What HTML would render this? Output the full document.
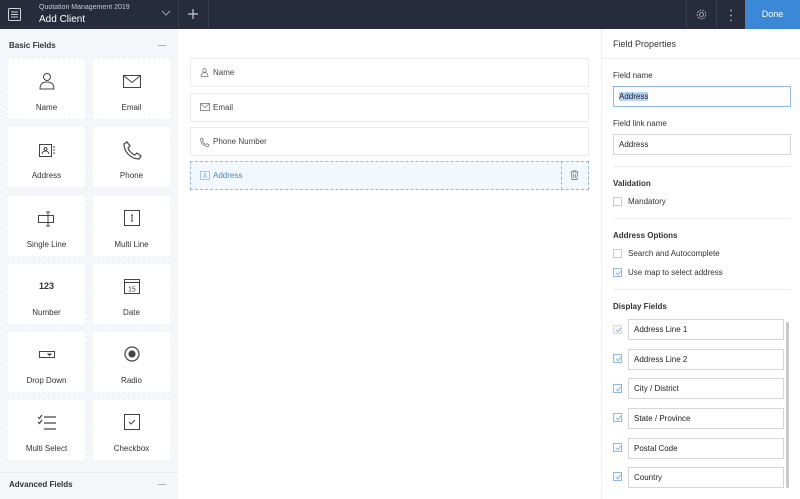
<!DOCTYPE html><html><head><style>
*{box-sizing:border-box;margin:0;padding:0}
body{width:800px;height:499px;overflow:hidden;font-family:"Liberation Sans",sans-serif;background:#fff;position:relative;color:#333}
.a{position:absolute}
.hdr{left:0;top:0;width:800px;height:29px;background:#262c3b}
.vs{top:0;width:1px;height:29px;background:#363d4d}
.side{left:0;top:29px;width:178px;height:470px;background:#f4f6fa}
.card{width:79px;height:62px;background:#fff;border:1px dashed #eef0f3;text-align:center;font-size:8px;color:#333}
.card span{position:absolute;left:0;right:0;top:44px}
.card svg{position:absolute;left:28px;top:12px}
.fld{left:190px;width:399px;height:29px;border:1px solid #ebebeb;font-size:8px;color:#444;padding:0 0 0 22px;line-height:27px}
.fld svg{position:absolute;left:9px;top:9px}
.rp{left:601px;top:29px;width:199px;height:470px;border-left:1px solid #eceef1;background:#fff}
.lbl{font-size:8px;color:#333}
.h{font-size:8px;font-weight:bold;color:#333}
.inp{border:1px solid #d6d6d6;font-size:8px;line-height:19px;padding-left:5px;color:#222}
.div{height:1px;background:#eee;left:613px;width:178px}
.cb{width:9px;height:9px;border:1px solid #ccc;background:#fff}
.cbc{border-color:#8fb8e6;background:#f6faff}
.cbc:after{content:"";position:absolute;left:3px;top:1px;width:2px;height:4px;border:solid #8fb8e6;border-width:0 1px 1px 0;transform:rotate(40deg)}
</style></head><body>
<div class="a hdr"></div>
<svg class="a" style="left:8px;top:8px" width="13" height="13" viewBox="0 0 13 13" fill="none" stroke="#cfd3da" stroke-width="1"><rect x="0.5" y="0.5" width="12" height="12" rx="1"/><path d="M3 4h7M3 6.5h7M3 9h7"/></svg>
<div class="a" style="left:39px;top:4px;font-size:7px;color:#c5c9d1">Quotation Management 2019</div>
<div class="a" style="left:39px;top:14px;font-size:10px;color:#fff">Add Client</div>
<svg class="a" style="left:161px;top:10px" width="10" height="6"><path d="M1 1l4 4 4-4" stroke="#9aa0ab" fill="none"/></svg>
<div class="a vs" style="left:178px"></div><div class="a vs" style="left:208px"></div>
<svg class="a" style="left:187px;top:8px" width="12" height="12"><path d="M6 1v10M1 6h10" stroke="#c5c9d1" stroke-width="1.2"/></svg>
<div class="a vs" style="left:686px"></div><div class="a vs" style="left:716px"></div>
<svg class="a" style="left:696px;top:9px" width="11" height="11" viewBox="0 0 11 11" fill="none" stroke="#9aa0ab"><circle cx="5.5" cy="5.5" r="2"/><circle cx="5.5" cy="5.5" r="4.3" stroke-dasharray="2 1"/></svg>
<div class="a" style="left:730px;top:8px;width:2px;height:13px;background:radial-gradient(circle,#9aa0ab 1px,transparent 1px) 0 0/2px 5px"></div>
<div class="a" style="left:745px;top:0;width:55px;height:29px;background:#3b87d8;color:#fff;font-size:9px;text-align:center;line-height:28px">Done</div>

<div class="a side"></div>
<div class="a h" style="left:9px;top:41px">Basic Fields</div>
<div class="a" style="left:158px;top:45px;width:8px;height:1px;background:#aaa"></div>

<div class="a card" style="left:7px;top:58px"><svg width="22" height="20" viewBox="0 0 22 20" fill="none" stroke="#444"><circle cx="11" cy="6" r="3.5"/><path d="M4 18c0-5 3-7 7-7s7 2 7 7z"/></svg><span>Name</span></div>
<div class="a card" style="left:92px;top:58px"><svg width="22" height="20" viewBox="0 0 22 20" fill="none" stroke="#444"><rect x="2.5" y="4.5" width="17" height="12"/><path d="M2.5 4.5l8.5 7 8.5-7"/></svg><span>Email</span></div>
<div class="a card" style="left:7px;top:126px"><svg width="22" height="22" viewBox="0 0 22 22" fill="none" stroke="#444"><rect x="3.5" y="5.5" width="12" height="12"/><circle cx="9.5" cy="10" r="1.5"/><path d="M6 15c0-2 2-3 3.5-3s3.5 1 3.5 3M17 8h2M17 11h2M17 14h2"/></svg><span>Address</span></div>
<div class="a card" style="left:92px;top:126px"><svg width="24" height="24" viewBox="0 0 24 24" fill="none" stroke="#444" stroke-width="1.2"><path d="M6 3l3 4-2 2c1 3 4 6 7 7l2-2 4 3-2 3c-8 0-15-7-15-15z"/></svg><span>Phone</span></div>
<div class="a card" style="left:7px;top:195px"><svg width="22" height="20" viewBox="0 0 22 20" fill="none" stroke="#444"><rect x="2.5" y="7.5" width="15" height="7"/><path d="M12 4v14M10 4h4M10 18h4"/></svg><span>Single Line</span></div>
<div class="a card" style="left:92px;top:195px"><svg width="22" height="20" viewBox="0 0 22 20" fill="none" stroke="#444"><rect x="3.5" y="2.5" width="15" height="15"/><path d="M11 7v6M10 7h2M10 13h2"/></svg><span>Multi Line</span></div>
<div class="a card" style="left:7px;top:263px"><div class="a" style="left:0;right:0;top:17px;font-size:9px;font-weight:bold">123</div><span>Number</span></div>
<div class="a card" style="left:92px;top:263px"><svg width="22" height="20" viewBox="0 0 22 20" fill="none" stroke="#444"><rect x="3.5" y="3.5" width="15" height="14"/><path d="M3.5 6.5h15"/><text x="7" y="15.5" font-size="7" fill="#444" stroke="none" font-family="Liberation Sans">15</text></svg><span>Date</span></div>
<div class="a card" style="left:7px;top:331px"><svg width="22" height="20" viewBox="0 0 22 20" fill="none" stroke="#444"><rect x="3.5" y="7.5" width="15" height="6"/><path d="M12 10h3l-1.5 1.5z" fill="#444"/></svg><span>Drop Down</span></div>
<div class="a card" style="left:92px;top:331px"><svg width="22" height="20" viewBox="0 0 22 20" fill="none" stroke="#444" stroke-width="1.2"><circle cx="11" cy="10" r="7"/><circle cx="11" cy="10" r="3" fill="#444"/></svg><span>Radio</span></div>
<div class="a card" style="left:7px;top:399px"><svg width="22" height="20" viewBox="0 0 22 20" fill="none" stroke="#444" stroke-width="1.2"><path d="M2 5l1.5 1.5L6 3M2 10l1.5 1.5L6 8M8 5h12M8 11h12M8 17h12"/></svg><span>Multi Select</span></div>
<div class="a card" style="left:92px;top:399px"><svg width="22" height="20" viewBox="0 0 22 20" fill="none" stroke="#444"><rect x="3.5" y="2.5" width="15" height="15"/><path d="M8 10l2 2 4-4"/></svg><span>Checkbox</span></div>
<div class="a" style="left:0;top:472px;width:178px;height:1px;background:#e8eaee"></div>
<div class="a h" style="left:9px;top:480px">Advanced Fields</div>
<div class="a" style="left:158px;top:484px;width:8px;height:1px;background:#aaa"></div>

<div class="a fld" style="top:58px"><svg width="9" height="9" viewBox="0 0 9 9" fill="none" stroke="#777" stroke-width=".8"><circle cx="4.5" cy="2.5" r="1.8"/><path d="M1 8.5c0-3 1.5-4 3.5-4s3.5 1 3.5 4z"/></svg>Name</div>
<div class="a fld" style="top:93px"><svg width="10" height="8" viewBox="0 0 10 8" fill="none" stroke="#777" stroke-width=".8"><rect x=".5" y=".5" width="9" height="7"/><path d="M.5 .5l4.5 4 4.5-4"/></svg>Email</div>
<div class="a fld" style="top:127px"><svg width="10" height="10" viewBox="0 0 10 10" fill="none" stroke="#777" stroke-width=".8"><path d="M2 1l1.5 2-1 1c.5 1.5 2 3 3.5 3.5l1-1 2 1.5-1 1.5C4 9.5.5 6 .5 2z"/></svg>Phone Number</div>
<div class="a fld" style="top:161px;border:1px dashed #8fb8e6;background:#f3f8fe;color:#3b87d8"><svg width="10" height="9" viewBox="0 0 10 9" fill="none" stroke="#8fb8e6" stroke-width=".8"><rect x=".5" y=".5" width="9" height="8"/><circle cx="5" cy="3.5" r="1"/><path d="M3 7c0-1 1-1.5 2-1.5s2 .5 2 1.5"/></svg>Address</div>
<div class="a" style="left:561px;top:161px;width:1px;height:29px;border-left:1px dashed #8fb8e6"></div>
<svg class="a" style="left:570px;top:170px" width="9" height="10" viewBox="0 0 9 10" fill="none" stroke="#888" stroke-width=".9"><path d="M.5 2h8M3 2V.8h3V2M1.5 2l.5 7.5h5l.5-7.5M3.5 4v4M5.5 4v4"/></svg>

<div class="a rp"></div>
<div class="a" style="left:613px;top:39px;font-size:9px;color:#333">Field Properties</div>
<div class="a" style="left:602px;top:58px;width:198px;height:1px;background:#eee"></div>
<div class="a lbl" style="left:613px;top:71px">Field name</div>
<div class="a inp" style="left:613px;top:86px;width:178px;height:21px;border-color:#8fb8e6"><span style="background:#b3d3f8">Address</span></div>
<div class="a lbl" style="left:613px;top:119px">Field link name</div>
<div class="a inp" style="left:613px;top:134px;width:178px;height:21px">Address</div>
<div class="a div" style="top:166px"></div>
<div class="a h" style="left:613px;top:179px">Validation</div>
<div class="a cb" style="left:613px;top:197px"></div><div class="a lbl" style="left:628px;top:197px">Mandatory</div>
<div class="a div" style="top:218px"></div>
<div class="a h" style="left:613px;top:231px">Address Options</div>
<div class="a cb" style="left:613px;top:249px"></div><div class="a lbl" style="left:628px;top:249px">Search and Autocomplete</div>
<div class="a cb cbc" style="left:613px;top:268px"></div><div class="a lbl" style="left:628px;top:268px">Use map to select address</div>
<div class="a div" style="top:289px"></div>
<div class="a h" style="left:613px;top:302px">Display Fields</div>
<div class="a cb cbc" style="left:613px;top:325px;border-color:#ddd;background:#f5f5f5"></div><div class="a inp" style="left:628px;top:319px;width:156px;height:21px">Address Line 1</div>
<div class="a cb cbc" style="left:613px;top:354px"></div><div class="a inp" style="left:628px;top:349px;width:156px;height:21px">Address Line 2</div>
<div class="a cb cbc" style="left:613px;top:384px"></div><div class="a inp" style="left:628px;top:378px;width:156px;height:21px">City / District</div>
<div class="a cb cbc" style="left:613px;top:413px"></div><div class="a inp" style="left:628px;top:408px;width:156px;height:21px">State / Province</div>
<div class="a cb cbc" style="left:613px;top:443px"></div><div class="a inp" style="left:628px;top:438px;width:156px;height:21px">Postal Code</div>
<div class="a cb cbc" style="left:613px;top:472px"></div><div class="a inp" style="left:628px;top:467px;width:156px;height:21px">Country</div>
<div class="a" style="left:786px;top:322px;width:3px;height:166px;background:#c8c8c8;border-radius:2px"></div>
</body></html>
